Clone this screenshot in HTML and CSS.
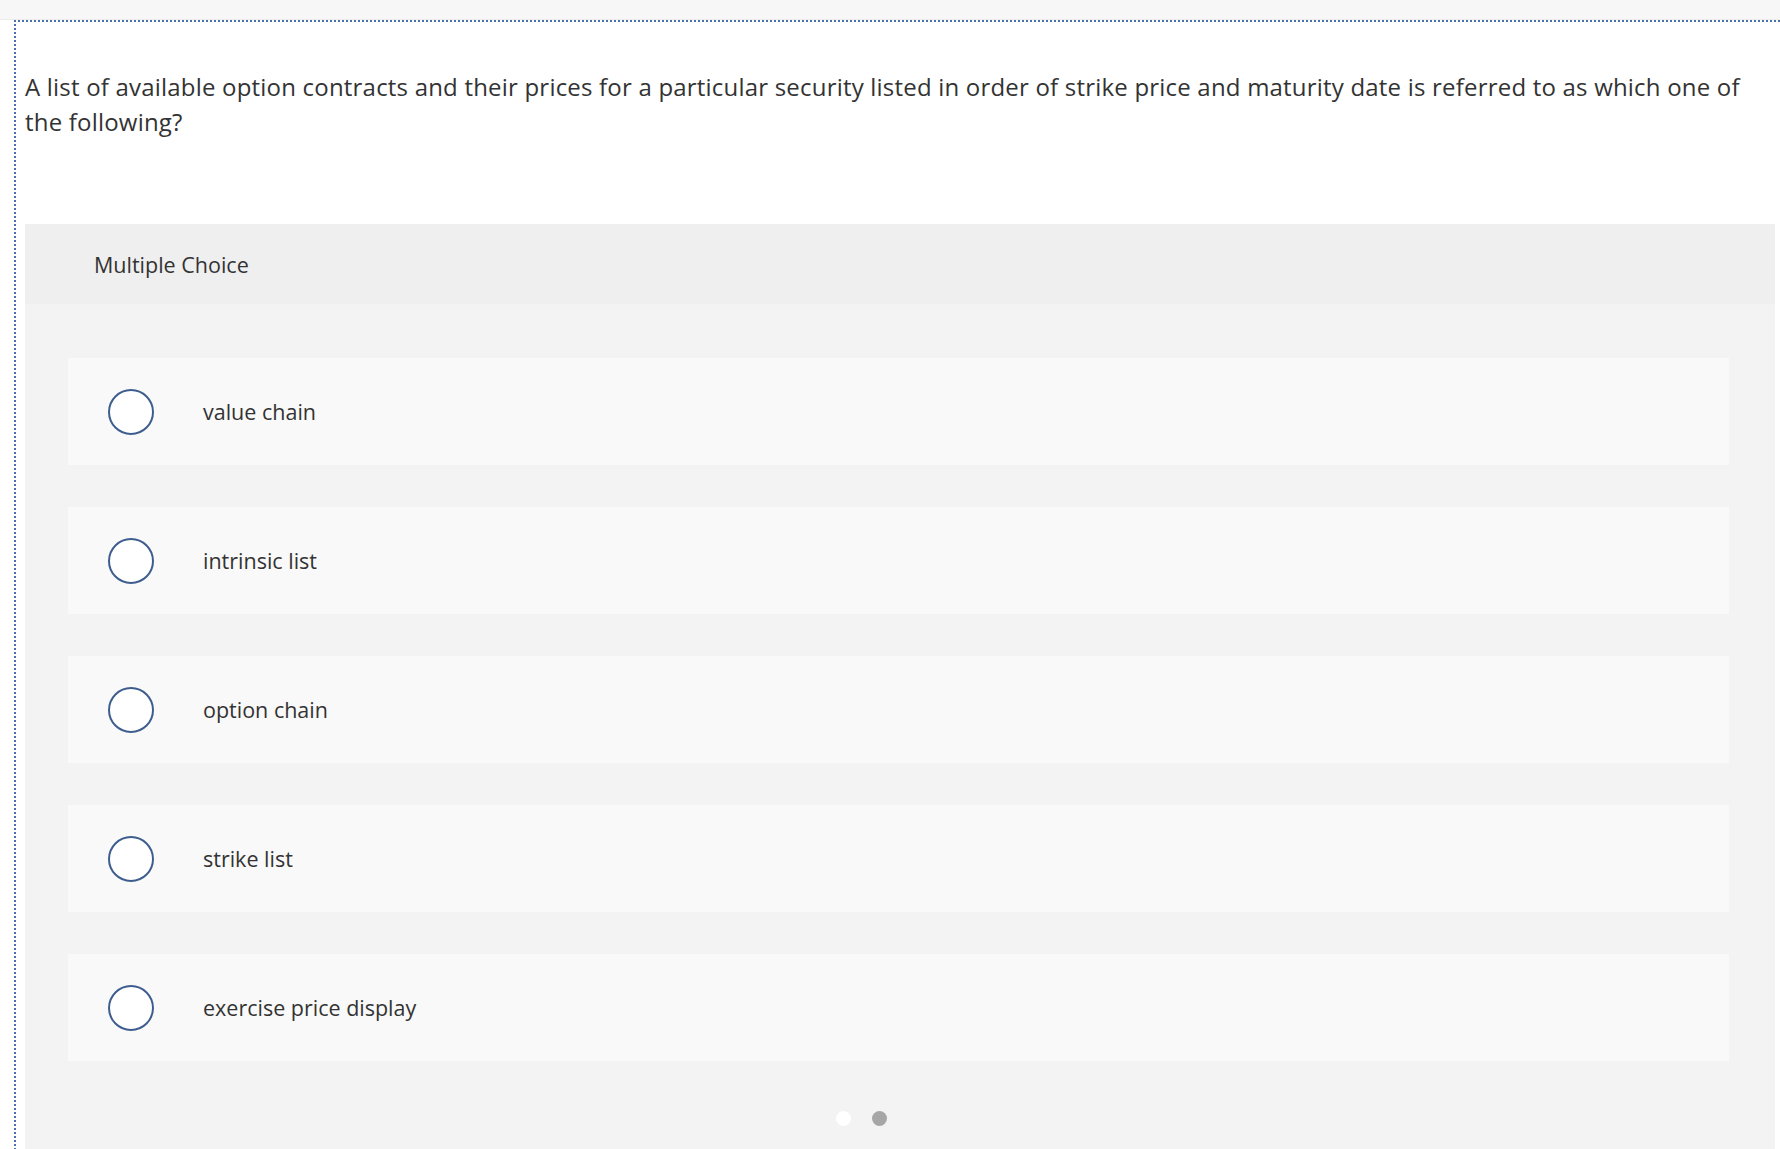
FILE: index.html
```html
<!DOCTYPE html>
<html>
<head>
<meta charset="utf-8">
<link rel="stylesheet" href="styles.css">
</head>
<body>
<div class="topstrip"></div>
<div class="frame">
  <p class="question">A list of available option contracts and their prices for a particular security listed in order of strike price and maturity date is referred to as which one of the following?</p>
  <div class="panel">
    <div class="panel-head">Multiple Choice</div>
    <div class="panel-body">
      <div class="choice"><span class="radio"></span><span class="label">value chain</span></div>
      <div class="choice"><span class="radio"></span><span class="label">intrinsic list</span></div>
      <div class="choice"><span class="radio"></span><span class="label">option chain</span></div>
      <div class="choice"><span class="radio"></span><span class="label">strike list</span></div>
      <div class="choice"><span class="radio"></span><span class="label">exercise price display</span></div>
      <div class="dots"><span class="dot dot-white"></span><span class="dot dot-gray"></span></div>
    </div>
  </div>
</div>
</body>
</html>
```
FILE: styles.css
```css
html, body {
  margin: 0;
  padding: 0;
  background: #ffffff;
  font-family: "Open Sans", Lato, sans-serif;
  color: #333333;
  height: 1149px;
  overflow: hidden;
}
.topstrip {
  height: 19px;
  background: #f7f7f7;
  border-bottom: 1px solid #ececec;
}
.frame {
  margin-left: 14px;
  border-top: 2px dotted #4a6fb5;
  border-left: 2px dotted #4a6fb5;
  padding-left: 9px;
  height: 1200px;
}
.question {
  margin: 0;
  padding-top: 47px;
  font-size: 24px;
  letter-spacing: 0.2px;
  line-height: 35px;
  color: #333333;
  padding-right: 30px;
}
.panel {
  margin-top: 85px;
  width: 1750px;
  background: #f3f3f3;
}
.panel-head {
  height: 80px;
  background: #efefef;
  display: flex;
  align-items: center;
  padding-left: 69px;
  font-size: 21.5px;
  color: #333333;
}
.panel-body {
  padding: 54px 46px 40px 43px;
  display: flex;
  flex-direction: column;
  gap: 42px;
}
.choice {
  height: 107px;
  background: #f9f9f9;
  display: flex;
  align-items: center;
  padding-left: 40px;
}
.radio {
  width: 42px;
  height: 42px;
  border: 2px solid #3e5d8f;
  border-radius: 50%;
  background: #ffffff;
  flex-shrink: 0;
}
.label {
  margin-left: 49px;
  font-size: 21.5px;
  color: #333333;
}
.dots {
  display: flex;
  justify-content: center;
  gap: 21px;
  margin-top: 8px;
  padding-right: 74px;
}
.dot {
  width: 15px;
  height: 15px;
  border-radius: 50%;
}
.dot-white { background: #ffffff; }
.dot-gray { background: #a6a6a6; }
```
